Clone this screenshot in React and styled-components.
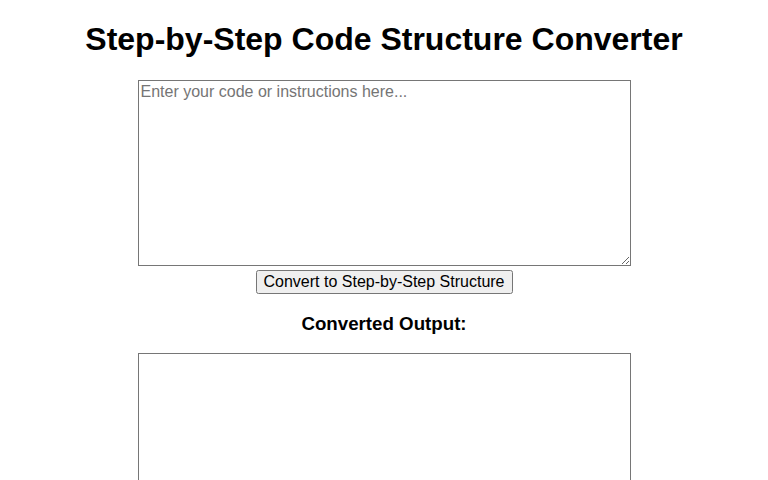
import React, { useState } from "react";
import styled, { createGlobalStyle } from "styled-components";

const GlobalStyle = createGlobalStyle`
  body {
    margin: 0 8px 8px;
    font-family: "Liberation Sans", Arial, sans-serif;
    background: #fff;
    color: #000;
  }
`;

const Page = styled.div`
  text-align: center;
`;

const Title = styled.h1`
  font-size: 32px;
  margin: 21.44px 0;
`;

const Input = styled.textarea`
  width: 493px;
  height: 186px;
  box-sizing: border-box;
  padding: 2px;
  font-family: "Liberation Sans", Arial, sans-serif;
  font-size: 16px;
  border: 1px solid #767676;
  margin: 0;

  &::placeholder {
    color: #757575;
  }
`;

const ConvertButton = styled.button`
  font-family: "Liberation Sans", Arial, sans-serif;
  font-size: 16px;
`;

const Subtitle = styled.h3`
  font-size: 18.72px;
  margin: 18.72px 0;
`;

const Output = styled.textarea`
  width: 493px;
  height: 186px;
  box-sizing: border-box;
  padding: 2px;
  font-family: "Liberation Sans", Arial, sans-serif;
  font-size: 16px;
  border: 1px solid #767676;
  margin: 0;
`;

export default function App() {
  const [code, setCode] = useState("");
  const [output, setOutput] = useState("");

  const convert = () => {
    const lines = code.split("\n").filter((l) => l.trim());
    setOutput(lines.map((l, i) => `Step ${i + 1}: ${l.trim()}`).join("\n"));
  };

  return (
    <Page>
      <GlobalStyle />
      <Title>Step-by-Step Code Structure Converter</Title>
      <Input
        placeholder="Enter your code or instructions here..."
        value={code}
        onChange={(e) => setCode(e.target.value)}
      />
      <br />
      <ConvertButton onClick={convert}>Convert to Step-by-Step Structure</ConvertButton>
      <Subtitle>Converted Output:</Subtitle>
      <Output readOnly value={output} />
    </Page>
  );
}
